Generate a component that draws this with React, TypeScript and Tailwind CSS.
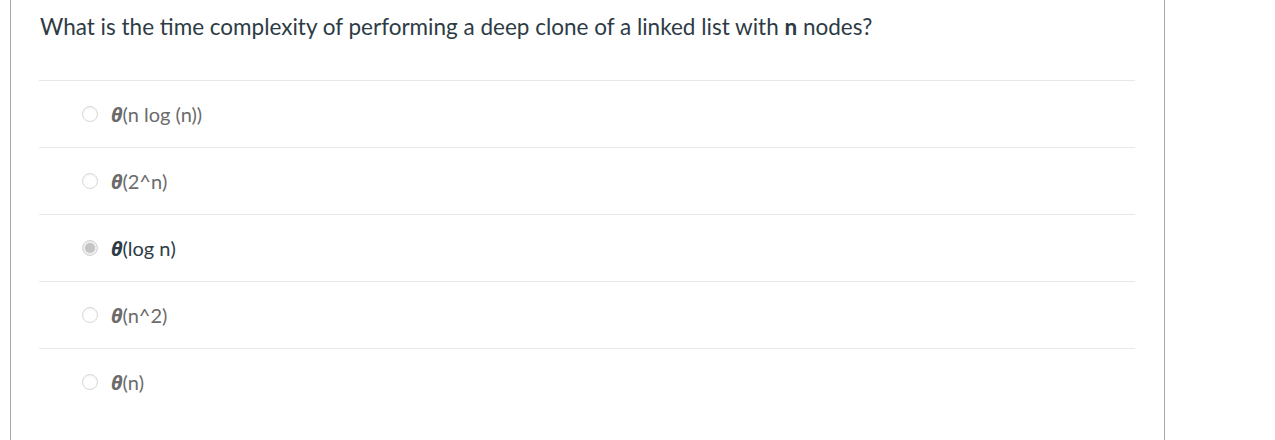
const options = [
  { id: "a", label: "(n log (n))" },
  { id: "b", label: "(2^n)" },
  { id: "c", label: "(log n)", selected: true },
  { id: "d", label: "(n^2)" },
  { id: "e", label: "(n)" },
];

function Radio({ checked }: { checked?: boolean }) {
  if (checked) {
    return (
      <span className="flex h-[16px] w-[16px] shrink-0 items-center justify-center rounded-full border border-[#d4d4d4] bg-[#ececec]">
        <span className="h-[10px] w-[10px] rounded-full bg-[#c4c4c4]" />
      </span>
    );
  }
  return (
    <span className="h-[16px] w-[16px] shrink-0 rounded-full border border-[#d8d8d8] bg-white shadow-[inset_0_1px_2px_rgba(0,0,0,0.06)]" />
  );
}

export default function App() {
  return (
    <div
      className="h-[440px] w-[1275px] overflow-hidden bg-white"
      style={{ fontFamily: "Lato, 'Liberation Sans', sans-serif" }}
    >
      <div className="ml-[10px] h-full w-[1155px] border-x border-[#a8a8a8] pl-[29px] pr-[29px]">
        <div className="pt-[12px] text-[22.5px] leading-[30px] text-[#2d3b45]">
          What is the time complexity of performing a deep clone of a linked list with{" "}
          <strong className="font-bold">n</strong> nodes?
        </div>

        <div className="mt-[38px] ml-[-1px]">
          {options.map((o) => (
            <div
              key={o.id}
              className="flex h-[67px] items-center border-t border-[#e8e8e8] pl-[43px]"
            >
              <Radio checked={o.selected} />
              <span
                className={`ml-[13px] text-[20px] leading-[24px] ${
                  o.selected ? "text-[#2d3b45]" : "text-[#6b6b6b]"
                }`}
              >
                <em className="font-['Noto_Sans',sans-serif] font-bold italic">θ</em>
                {o.label}
              </span>
            </div>
          ))}
        </div>
      </div>
    </div>
  );
}
